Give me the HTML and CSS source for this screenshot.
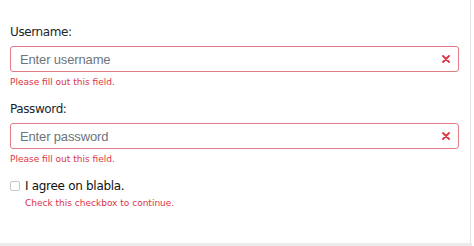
FILE: index.html
```html
<!DOCTYPE html>
<html>
<head>
<meta charset="utf-8">
<link rel="stylesheet" href="styles.css">
</head>
<body>
<div class="card">
  <form class="form">
    <div class="group">
      <label class="label">Username:</label>
      <div class="field">
        <span class="placeholder">Enter username</span>
        <svg class="x" width="8" height="8" viewBox="0 0 8 8"><path d="M1 1L7 7M7 1L1 7" stroke="#dc3545" stroke-width="1.8" stroke-linecap="round"/></svg>
      </div>
      <div class="error">Please fill out this field.</div>
    </div>
    <div class="group">
      <label class="label">Password:</label>
      <div class="field">
        <span class="placeholder">Enter password</span>
        <svg class="x" width="8" height="8" viewBox="0 0 8 8"><path d="M1 1L7 7M7 1L1 7" stroke="#dc3545" stroke-width="1.8" stroke-linecap="round"/></svg>
      </div>
      <div class="error">Please fill out this field.</div>
    </div>
    <div class="check">
      <div class="check-row">
        <span class="box"></span>
        <span class="check-label">I agree on blabla.</span>
      </div>
      <div class="error indent">Check this checkbox to continue.</div>
    </div>
  </form>
</div>
<div class="strip"></div>
</body>
</html>
```

FILE: styles.css
```css
html, body {
  margin: 0;
  padding: 0;
  background: #fff;
}
.card {
  width: 471px;
  height: 243px;
  box-sizing: border-box;
  border-right: 1px solid #e3e3e3;
  padding: 24px 0 0 10px;
}
.strip {
  width: 472px;
  height: 3px;
  background: #ececec;
}
.form {
  width: 449px;
  font-family: "DejaVu Sans", Verdana, sans-serif;
  color: #212529;
}
.group {
  display: flex;
  flex-direction: column;
  margin-bottom: 13px;
}
.label {
  font-size: 12px;
  letter-spacing: -0.4px;
  line-height: 16px;
  margin-bottom: 6px;
}
.field {
  height: 26px;
  box-sizing: border-box;
  border: 1px solid #e27c87;
  border-radius: 3px;
  display: flex;
  align-items: center;
  justify-content: space-between;
  padding: 0 8px 0 9px;
}
.placeholder {
  font-family: "Liberation Sans", Arial, sans-serif;
  font-size: 13px;
  letter-spacing: -0.15px;
  color: #6c757d;
}
.x {
  display: block;
}
.error {
  font-size: 9px;
  line-height: 12px;
  color: #dc3545;
  margin-top: 4px;
}
.check {
  margin-top: 2px;
}
.check-row {
  display: flex;
  align-items: center;
  gap: 5px;
}
.box {
  width: 8px;
  height: 8px;
  border: 1px solid #c8c8c8;
  border-radius: 2px;
  background: #fff;
}
.check-label {
  font-size: 12px;
  letter-spacing: -0.3px;
  line-height: 16px;
  color: #111;
}
.indent {
  margin-left: 15px;
  margin-top: 3px;
}
```
